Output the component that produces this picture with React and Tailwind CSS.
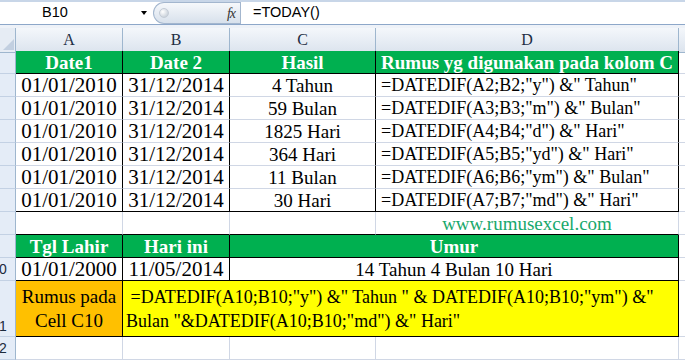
import React from 'react';

// column widths: row header, A, B, C, D, E
const GRID = "grid grid-cols-[16px_107px_107px_146px_303px_1fr] font-['Liberation_Serif',serif] text-black";

const rowHead = "h-full bg-[#e4ecf7] border-r border-b border-r-[#9eb6ce] border-b-[#c3d1e4] flex items-center overflow-hidden font-['Liberation_Sans',sans-serif] text-[14px] leading-none text-[#1b2a3c]";
const colE = "h-full border-b border-b-[#d0d7e5]";
const plain = "h-full border-r border-b border-[#d0d7e5]";
const green = "h-full bg-[#00b050] border-r border-b border-black flex items-center justify-center text-white font-bold text-[19px] leading-none";
const dataMid = "h-full border-r border-b border-r-black border-b-[#d0d7e5] flex items-center";
const dataLast = "h-full border-r border-b border-black flex items-center";

const results = [
    ['4 Tahun', '=DATEDIF(A2;B2;"y") &" Tahun"'],
    ['59 Bulan', '=DATEDIF(A3;B3;"m") &" Bulan"'],
    ['1825 Hari', '=DATEDIF(A4;B4;"d") &" Hari"'],
    ['364 Hari', '=DATEDIF(A5;B5;"yd") &" Hari"'],
    ['11 Bulan', '=DATEDIF(A6;B6;"ym") &" Bulan"'],
    ['30 Hari', '=DATEDIF(A7;B7;"md") &" Hari"'],
];

function FormulaBar() {
    return (
        <div className="h-[28px] flex flex-col bg-[#eef2f8]">
            <div className="h-[2px] bg-[#c8d6e8]" />
            <div className="h-[23px] flex bg-white border-b border-[#8da7c9] font-['Liberation_Sans',sans-serif] text-[14.5px] text-black">
                <div className="w-[153px] flex items-center">
                    <span className="w-[110px] text-center">B10</span>
                    <span className="ml-[31px] w-0 h-0 border-l-[3.5px] border-r-[3.5px] border-t-[4px] border-l-transparent border-r-transparent border-t-black" />
                </div>
                <div className="w-[87px] flex items-center justify-between pl-[5px] pr-[5px] rounded-l-full border border-r-0 border-[#a3b6ce] bg-linear-to-b from-[#f6f8fb] to-[#d8e1ec]">
                    <span className="w-[10px] h-[10px] rounded-full bg-radial-[at_35%_35%] from-white to-[#b9c3cf] border border-[#c4ccd6]" />
                    <span className="font-['Liberation_Serif',serif] italic text-[14px] text-[#333] tracking-[-1px]">fx</span>
                </div>
                <div className="flex-1 flex items-center pl-[12px] border-l border-[#a3b6ce]">=TODAY()</div>
            </div>
            <div className="flex-1" />
        </div>
    );
}

function ColumnHeaders() {
    const hdr = "h-full border-r border-b border-[#9eb6ce] bg-linear-to-b from-[#f4f7fb] to-[#dce4ee] flex items-center justify-center text-[16px] text-[#1e2e44]";
    return (
        <div className={`${GRID} h-[23px]`}>
            <div className="h-full bg-[#e6ecf4] border-r border-b border-[#9eb6ce] relative">
                <svg className="absolute right-[1px] bottom-[2px]" width="11" height="11" viewBox="0 0 11 11">
                    <path d="M11 0 L11 11 L0 11 Z" fill="#c2cfe0" />
                </svg>
            </div>
            <div className={hdr}>A</div>
            <div className={hdr}>B</div>
            <div className={hdr}>C</div>
            <div className={hdr}>D</div>
            <div className="h-full border-b border-[#9eb6ce] bg-linear-to-b from-[#f4f7fb] to-[#dce4ee]" />
        </div>
    );
}

export default function App() {
    return (
        <div className="w-[685px] h-[360px] overflow-hidden bg-white">
            <FormulaBar />
            <ColumnHeaders />

            {/* row 1 */}
            <div className={`${GRID} h-[23px]`}>
                <div className={rowHead} />
                <div className={green}>Date1</div>
                <div className={green}>Date 2</div>
                <div className={green}>Hasil</div>
                <div className={green}>Rumus yg digunakan pada kolom C</div>
                <div className={colE} />
            </div>

            {/* rows 2-7 */}
            {results.map(([hasil, rumus], i) => {
                const c = i === results.length - 1 ? dataLast : dataMid;
                return (
                    <div key={i} className={`${GRID} h-[23px]`}>
                        <div className={rowHead} />
                        <div className={`${c} justify-center text-[21px] leading-none`}>01/01/2010</div>
                        <div className={`${c} justify-center text-[21px] leading-none`}>31/12/2014</div>
                        <div className={`${c} justify-center text-[19px] leading-none`}>{hasil}</div>
                        <div className={`${c} pl-[5px] text-[18px] leading-none whitespace-pre`}>{rumus}</div>
                        <div className={colE} />
                    </div>
                );
            })}

            {/* row 8 */}
            <div className={`${GRID} h-[23px]`}>
                <div className={rowHead} />
                <div className="h-full border-r border-b border-r-[#d0d7e5] border-b-black" />
                <div className="h-full border-r border-b border-r-[#d0d7e5] border-b-black" />
                <div className="h-full border-r border-b border-r-[#d0d7e5] border-b-black" />
                <div className="h-full border-r border-b border-r-[#d0d7e5] border-b-black flex items-center justify-center text-[19px] leading-none text-[#19a86c]">
                    www.rumusexcel.com
                </div>
                <div className={colE} />
            </div>

            {/* row 9 */}
            <div className={`${GRID} h-[23px]`}>
                <div className={rowHead} />
                <div className={green}>Tgl Lahir</div>
                <div className={green}>Hari ini</div>
                <div className={`${green} col-span-2`}>Umur</div>
                <div className={colE} />
            </div>

            {/* row 10 */}
            <div className={`${GRID} h-[23px]`}>
                <div className={rowHead}><span className="-ml-[1px]">0</span></div>
                <div className={`${dataLast} justify-center text-[21px] leading-none`}>01/01/2000</div>
                <div className={`${dataLast} justify-center text-[21px] leading-none`}>11/05/2014</div>
                <div className={`${dataLast} col-span-2 justify-center text-[19px] leading-none`}>14 Tahun 4 Bulan 10 Hari</div>
                <div className={colE} />
            </div>

            {/* row 11 */}
            <div className={`${GRID} h-[56px]`}>
                <div className={`${rowHead} items-end pb-[3px]`}><span className="-ml-[1px]">1</span></div>
                <div className="h-full bg-[#ffc000] border-r border-b border-black flex flex-col items-center justify-center text-[19px] leading-[24px]">
                    <span>Rumus pada</span>
                    <span>Cell C10</span>
                </div>
                <div className="col-span-3 h-full bg-[#ffff00] border-r border-b border-black flex flex-col justify-center pl-[3px] text-[18px] leading-[24px] whitespace-pre">
                    <span>{' =DATEDIF(A10;B10;"y") &" Tahun " & DATEDIF(A10;B10;"ym") &"'}</span>
                    <span>{'Bulan "&DATEDIF(A10;B10;"md") &" Hari"'}</span>
                </div>
                <div className={colE} />
            </div>

            {/* row 12 */}
            <div className={`${GRID} h-[23px]`}>
                <div className={rowHead}><span className="-ml-[1px]">2</span></div>
                <div className={plain} />
                <div className={plain} />
                <div className={plain} />
                <div className={plain} />
                <div className={colE} />
            </div>
        </div>
    );
}
